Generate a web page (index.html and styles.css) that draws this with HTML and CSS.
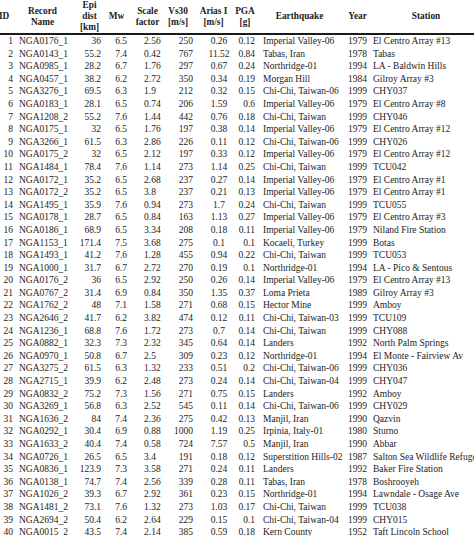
FILE: index.html
```html
<!DOCTYPE html>
<html>
<head>
<meta charset="utf-8">
<link rel="stylesheet" href="styles.css">
</head>
<body>
<table class="gm">
<colgroup>
<col class="c-id"><col class="c-rec"><col class="c-epi"><col class="c-mw"><col class="c-sf"><col class="c-vs"><col class="c-ai"><col class="c-pga"><col class="c-eq"><col class="c-yr"><col class="c-st">
</colgroup>
<thead>
<tr>
<th class="h-id">ID</th>
<th class="h-rec">Record<br>Name</th>
<th>Epi<br>dist<br>[km]</th>
<th>Mw</th>
<th>Scale<br>factor</th>
<th class="h-vs">Vs30<br>[m/s]</th>
<th class="h-ai">Arias I<br>[m/s]</th>
<th>PGA<br>[g]</th>
<th class="h-eq">Earthquake</th>
<th>Year</th>
<th>Station</th>
</tr>
</thead>
<tbody>
<tr><td>1</td><td>NGA0176_1</td><td>36</td><td>6.5</td><td>2.56</td><td>250</td><td>0.26</td><td>0.12</td><td>Imperial Valley-06</td><td>1979</td><td>El Centro Array #13</td></tr>
<tr><td>2</td><td>NGA0143_1</td><td>55.2</td><td>7.4</td><td>0.42</td><td>767</td><td>11.52</td><td>0.84</td><td>Tabas, Iran</td><td>1978</td><td>Tabas</td></tr>
<tr><td>3</td><td>NGA0985_1</td><td>28.2</td><td>6.7</td><td>1.76</td><td>297</td><td>0.67</td><td>0.24</td><td>Northridge-01</td><td>1994</td><td>LA - Baldwin Hills</td></tr>
<tr><td>4</td><td>NGA0457_1</td><td>38.2</td><td>6.2</td><td>2.72</td><td>350</td><td>0.34</td><td>0.19</td><td>Morgan Hill</td><td>1984</td><td>Gilroy Array #3</td></tr>
<tr><td>5</td><td>NGA3276_1</td><td>69.5</td><td>6.3</td><td>1.9</td><td>212</td><td>0.32</td><td>0.15</td><td>Chi-Chi, Taiwan-06</td><td>1999</td><td>CHY037</td></tr>
<tr><td>6</td><td>NGA0183_1</td><td>28.1</td><td>6.5</td><td>0.74</td><td>206</td><td>1.59</td><td>0.6</td><td>Imperial Valley-06</td><td>1979</td><td>El Centro Array #8</td></tr>
<tr><td>7</td><td>NGA1208_2</td><td>55.2</td><td>7.6</td><td>1.44</td><td>442</td><td>0.76</td><td>0.18</td><td>Chi-Chi, Taiwan</td><td>1999</td><td>CHY046</td></tr>
<tr><td>8</td><td>NGA0175_1</td><td>32</td><td>6.5</td><td>1.76</td><td>197</td><td>0.38</td><td>0.14</td><td>Imperial Valley-06</td><td>1979</td><td>El Centro Array #12</td></tr>
<tr><td>9</td><td>NGA3266_1</td><td>61.5</td><td>6.3</td><td>2.86</td><td>226</td><td>0.11</td><td>0.12</td><td>Chi-Chi, Taiwan-06</td><td>1999</td><td>CHY026</td></tr>
<tr><td>10</td><td>NGA0175_2</td><td>32</td><td>6.5</td><td>2.12</td><td>197</td><td>0.33</td><td>0.12</td><td>Imperial Valley-06</td><td>1979</td><td>El Centro Array #12</td></tr>
<tr><td>11</td><td>NGA1484_1</td><td>78.4</td><td>7.6</td><td>1.14</td><td>273</td><td>1.14</td><td>0.25</td><td>Chi-Chi, Taiwan</td><td>1999</td><td>TCU042</td></tr>
<tr><td>12</td><td>NGA0172_1</td><td>35.2</td><td>6.5</td><td>2.68</td><td>237</td><td>0.27</td><td>0.14</td><td>Imperial Valley-06</td><td>1979</td><td>El Centro Array #1</td></tr>
<tr><td>13</td><td>NGA0172_2</td><td>35.2</td><td>6.5</td><td>3.8</td><td>237</td><td>0.21</td><td>0.13</td><td>Imperial Valley-06</td><td>1979</td><td>El Centro Array #1</td></tr>
<tr><td>14</td><td>NGA1495_1</td><td>35.9</td><td>7.6</td><td>0.94</td><td>273</td><td>1.7</td><td>0.24</td><td>Chi-Chi, Taiwan</td><td>1999</td><td>TCU055</td></tr>
<tr><td>15</td><td>NGA0178_1</td><td>28.7</td><td>6.5</td><td>0.84</td><td>163</td><td>1.13</td><td>0.27</td><td>Imperial Valley-06</td><td>1979</td><td>El Centro Array #3</td></tr>
<tr><td>16</td><td>NGA0186_1</td><td>68.9</td><td>6.5</td><td>3.34</td><td>208</td><td>0.18</td><td>0.11</td><td>Imperial Valley-06</td><td>1979</td><td>Niland Fire Station</td></tr>
<tr><td>17</td><td>NGA1153_1</td><td>171.4</td><td>7.5</td><td>3.68</td><td>275</td><td>0.1</td><td>0.1</td><td>Kocaeli, Turkey</td><td>1999</td><td>Botas</td></tr>
<tr><td>18</td><td>NGA1493_1</td><td>41.2</td><td>7.6</td><td>1.28</td><td>455</td><td>0.94</td><td>0.22</td><td>Chi-Chi, Taiwan</td><td>1999</td><td>TCU053</td></tr>
<tr><td>19</td><td>NGA1000_1</td><td>31.7</td><td>6.7</td><td>2.72</td><td>270</td><td>0.19</td><td>0.1</td><td>Northridge-01</td><td>1994</td><td>LA - Pico &amp; Sentous</td></tr>
<tr><td>20</td><td>NGA0176_2</td><td>36</td><td>6.5</td><td>2.92</td><td>250</td><td>0.26</td><td>0.14</td><td>Imperial Valley-06</td><td>1979</td><td>El Centro Array #13</td></tr>
<tr><td>21</td><td>NGA0767_2</td><td>31.4</td><td>6.9</td><td>0.84</td><td>350</td><td>1.35</td><td>0.37</td><td>Loma Prieta</td><td>1989</td><td>Gilroy Array #3</td></tr>
<tr><td>22</td><td>NGA1762_2</td><td>48</td><td>7.1</td><td>1.58</td><td>271</td><td>0.68</td><td>0.15</td><td>Hector Mine</td><td>1999</td><td>Amboy</td></tr>
<tr><td>23</td><td>NGA2646_2</td><td>41.7</td><td>6.2</td><td>3.82</td><td>474</td><td>0.12</td><td>0.11</td><td>Chi-Chi, Taiwan-03</td><td>1999</td><td>TCU109</td></tr>
<tr><td>24</td><td>NGA1236_1</td><td>68.8</td><td>7.6</td><td>1.72</td><td>273</td><td>0.7</td><td>0.14</td><td>Chi-Chi, Taiwan</td><td>1999</td><td>CHY088</td></tr>
<tr><td>25</td><td>NGA0882_1</td><td>32.3</td><td>7.3</td><td>2.32</td><td>345</td><td>0.64</td><td>0.14</td><td>Landers</td><td>1992</td><td>North Palm Springs</td></tr>
<tr><td>26</td><td>NGA0970_1</td><td>50.8</td><td>6.7</td><td>2.5</td><td>309</td><td>0.23</td><td>0.12</td><td>Northridge-01</td><td>1994</td><td>El Monte - Fairview Av</td></tr>
<tr><td>27</td><td>NGA3275_2</td><td>61.5</td><td>6.3</td><td>1.32</td><td>233</td><td>0.51</td><td>0.2</td><td>Chi-Chi, Taiwan-06</td><td>1999</td><td>CHY036</td></tr>
<tr><td>28</td><td>NGA2715_1</td><td>39.9</td><td>6.2</td><td>2.48</td><td>273</td><td>0.24</td><td>0.14</td><td>Chi-Chi, Taiwan-04</td><td>1999</td><td>CHY047</td></tr>
<tr><td>29</td><td>NGA0832_2</td><td>75.2</td><td>7.3</td><td>1.56</td><td>271</td><td>0.75</td><td>0.15</td><td>Landers</td><td>1992</td><td>Amboy</td></tr>
<tr><td>30</td><td>NGA3269_1</td><td>56.8</td><td>6.3</td><td>2.52</td><td>545</td><td>0.11</td><td>0.14</td><td>Chi-Chi, Taiwan-06</td><td>1999</td><td>CHY029</td></tr>
<tr><td>31</td><td>NGA1636_2</td><td>84</td><td>7.4</td><td>2.36</td><td>275</td><td>0.42</td><td>0.13</td><td>Manjil, Iran</td><td>1990</td><td>Qazvin</td></tr>
<tr><td>32</td><td>NGA0292_1</td><td>30.4</td><td>6.9</td><td>0.88</td><td>1000</td><td>1.19</td><td>0.25</td><td>Irpinia, Italy-01</td><td>1980</td><td>Sturno</td></tr>
<tr><td>33</td><td>NGA1633_2</td><td>40.4</td><td>7.4</td><td>0.58</td><td>724</td><td>7.57</td><td>0.5</td><td>Manjil, Iran</td><td>1990</td><td>Abbar</td></tr>
<tr><td>34</td><td>NGA0726_1</td><td>26.5</td><td>6.5</td><td>3.4</td><td>191</td><td>0.18</td><td>0.12</td><td>Superstition Hills-02</td><td>1987</td><td>Salton Sea Wildlife Refuge</td></tr>
<tr><td>35</td><td>NGA0836_1</td><td>123.9</td><td>7.3</td><td>3.58</td><td>271</td><td>0.24</td><td>0.11</td><td>Landers</td><td>1992</td><td>Baker Fire Station</td></tr>
<tr><td>36</td><td>NGA0138_1</td><td>74.7</td><td>7.4</td><td>2.56</td><td>339</td><td>0.28</td><td>0.11</td><td>Tabas, Iran</td><td>1978</td><td>Boshrooyeh</td></tr>
<tr><td>37</td><td>NGA1026_2</td><td>39.3</td><td>6.7</td><td>2.92</td><td>361</td><td>0.23</td><td>0.15</td><td>Northridge-01</td><td>1994</td><td>Lawndale - Osage Ave</td></tr>
<tr><td>38</td><td>NGA1481_2</td><td>73.1</td><td>7.6</td><td>1.32</td><td>273</td><td>1.03</td><td>0.17</td><td>Chi-Chi, Taiwan</td><td>1999</td><td>TCU038</td></tr>
<tr><td>39</td><td>NGA2694_2</td><td>50.4</td><td>6.2</td><td>2.64</td><td>229</td><td>0.15</td><td>0.1</td><td>Chi-Chi, Taiwan-04</td><td>1999</td><td>CHY015</td></tr>
<tr><td>40</td><td>NGA0015_2</td><td>43.5</td><td>7.4</td><td>2.14</td><td>385</td><td>0.59</td><td>0.18</td><td>Kern County</td><td>1952</td><td>Taft Lincoln School</td></tr>
</tbody>
</table>
</body>
</html>
```
FILE: styles.css
```css
html, body {
  margin: 0;
  padding: 0;
  background: #fff;
  overflow: hidden;
}
body {
  width: 474px;
  height: 536px;
}
.gm {
  border-collapse: collapse;
  table-layout: fixed;
  width: 482px;
  font-family: "Liberation Serif", "Times New Roman", serif;
  font-size: 9.5px;
  color: #1c1c1c;
}
.c-id { width: 15px; }
.c-rec { width: 61px; }
.c-epi { width: 27px; }
.c-mw { width: 27px; }
.c-sf { width: 35px; }
.c-vs { width: 32px; }
.c-ai { width: 35px; }
.c-pga { width: 26px; }
.c-eq { width: 87px; }
.c-yr { width: 25px; }
.c-st { width: 112px; }

.gm th {
  height: 33px;
  padding: 0;
  font-weight: bold;
  font-size: 9.3px;
  line-height: 11px;
  text-align: center;
  vertical-align: middle;
  border-bottom: 2px solid #1a1a1a;
  white-space: nowrap;
}
.gm th.h-id {
  text-align: left;
  text-indent: -1px;
}
.gm th.h-rec { padding-right: 6px; }
.gm th.h-vs { padding-right: 6px; }
.gm th.h-ai { padding-right: 2px; }
.gm th.h-eq { padding-right: 4px; }
.gm td {
  height: 12.6px;
  padding: 0;
  line-height: 12.6px;
  white-space: nowrap;
  overflow: visible;
}
.gm td:nth-child(1) { text-align: right; padding-right: 2px; }
.gm td:nth-child(2) { text-align: left; padding-left: 4px; }
.gm td:nth-child(3) { text-align: right; padding-right: 2px; }
.gm td:nth-child(4) { text-align: right; padding-right: 3px; }
.gm td:nth-child(5) { text-align: left; padding-left: 14px; }
.gm td:nth-child(6) { text-align: right; padding-right: 4px; }
.gm td:nth-child(7) { text-align: center; padding-left: 9px; }
.gm td:nth-child(8) { text-align: right; padding-right: 3px; }
.gm td:nth-child(9) { text-align: left; padding-left: 5px; }
.gm td:nth-child(10) { text-align: right; padding-right: 3px; }
.gm td:nth-child(11) { text-align: left; padding-left: 3px; }
```
